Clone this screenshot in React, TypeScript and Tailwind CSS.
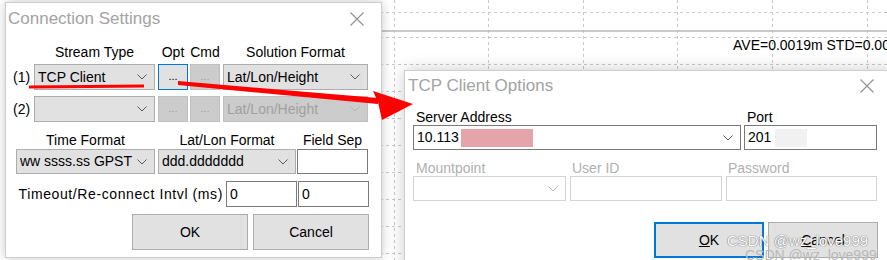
import React from 'react';

const font = { fontFamily: '"Liberation Sans", Arial, sans-serif' };

const Chevron: React.FC<{ muted?: boolean }> = ({ muted }) => (
    <svg width="10" height="6" viewBox="0 0 10 6" className="shrink-0">
        <polyline points="0.5,0.5 5,5 9.5,0.5" fill="none" stroke={muted ? '#b4b4b4' : '#5a5a5a'} strokeWidth="1" />
    </svg>
);

const CloseX = () => (
    <svg width="14" height="14" viewBox="0 0 14 14">
        <path d="M0.5 0.5 L13.5 13.5 M13.5 0.5 L0.5 13.5" stroke="#8f8f8f" strokeWidth="1.1" fill="none" />
    </svg>
);

interface ComboProps {
    text?: string;
    w: string;
    disabled?: boolean;
    white?: boolean;
    children?: React.ReactNode;
    className?: string;
}

const Combo: React.FC<ComboProps> = ({ text, w, disabled, white, children, className }) => {
    const box = white
        ? disabled
            ? 'bg-white border-[#d4d4d4]'
            : 'bg-white border-[#7a7a7a]'
        : disabled
            ? 'bg-[#cccccc] border-[#bfbfbf] text-[#a0a0a0]'
            : 'bg-[#e1e1e1] border-[#adadad]';
    return (
        <div className={`${w} ${box} ${className ?? ''} h-full border flex items-center pl-[3px] pr-[7px]`}>
            <div className="flex-1 flex items-center overflow-hidden whitespace-nowrap">
                {text}
                {children}
            </div>
            <Chevron muted={disabled} />
        </div>
    );
};

const DotBtn: React.FC<{ focus?: boolean; className?: string }> = ({ focus, className }) => (
    <div
        className={`w-[30px] h-full border flex items-center justify-center text-[11px] leading-none pb-[2px] ${
            focus ? 'bg-[#e1e1e1] border-[#0078d7] text-black' : 'bg-[#cccccc] border-[#bfbfbf] text-[#a0a0a0]'
        } ${className ?? ''}`}
    >
        ...
    </div>
);

const Field: React.FC<{ w: string; text?: string; disabled?: boolean; className?: string; children?: React.ReactNode }> = ({
    w,
    text,
    disabled,
    className,
    children,
}) => (
    <div
        className={`${w} h-full border bg-white flex items-center pl-[3px] ${
            disabled ? 'border-[#d4d4d4]' : 'border-[#7a7a7a]'
        } ${className ?? ''}`}
    >
        {text}
        {children}
    </div>
);

const Btn: React.FC<{ w: string; focus?: boolean; className?: string; children: React.ReactNode }> = ({
    w,
    focus,
    className,
    children,
}) => (
    <div
        className={`${w} h-full bg-[#e1e1e1] flex items-center justify-center ${
            focus ? 'border-2 border-[#0078d7]' : 'border border-[#adadad]'
        } ${className ?? ''}`}
    >
        {children}
    </div>
);

const ChartGrid = () => {
    const xs = [394, 488, 583, 677, 772, 867];
    const ys = [12, 37, 64, 91, 118, 145, 172, 199, 226, 253];
    return (
        <svg width="887" height="260" className="absolute inset-0">
            {xs.map(x => (
                <line key={x} x1={x + 0.5} y1={0} x2={x + 0.5} y2={260} stroke="#c9c9c9" strokeDasharray="3 3" />
            ))}
            {ys.map(y => (
                <line key={y} x1={380} y1={y + 0.5} x2={887} y2={y + 0.5} stroke="#c9c9c9" strokeDasharray="3 3" />
            ))}
            <line x1={380} y1={31} x2={887} y2={31} stroke="#b8b8b8" strokeWidth="1.5" />
        </svg>
    );
};

const ConnectionSettings = () => (
    <div className="absolute left-[5px] top-[2px] w-[377px] h-[256px] bg-white border border-[#cdcdcd] shadow-[0_0_10px_rgba(0,0,0,0.22)] flex flex-col text-[14px] text-black">
        <div className="h-[32px] flex items-center justify-between pl-[2px] pr-[17px]">
            <span className="text-[17px] text-[#a3a3a3]">Connection Settings</span>
            <CloseX />
        </div>

        {/* stream header */}
        <div className="mt-[8px] h-[18px] flex items-center pl-[28px] leading-none">
            <div className="w-[121px] text-center">Stream Type</div>
            <div className="w-[30px] ml-[3px] text-center">Opt</div>
            <div className="w-[30px] ml-[2px] text-center">Cmd</div>
            <div className="w-[145px] ml-[3px] text-center">Solution Format</div>
        </div>

        <div className="mt-[3px] h-[26px] flex items-center pl-[7px]">
            <div className="w-[21px]">(1)</div>
            <Combo w="w-[121px]" text="TCP Client" />
            <DotBtn focus className="ml-[3px]" />
            <DotBtn className="ml-[2px]" />
            <Combo w="w-[145px]" text="Lat/Lon/Height" className="ml-[3px]" />
        </div>

        <div className="mt-[6px] h-[26px] flex items-center pl-[7px]">
            <div className="w-[21px]">(2)</div>
            <Combo w="w-[121px]" />
            <DotBtn className="ml-[3px]" />
            <DotBtn className="ml-[2px]" />
            <Combo w="w-[145px]" text="Lat/Lon/Height" disabled className="ml-[3px]" />
        </div>

        {/* format header */}
        <div className="mt-[9px] h-[18px] flex items-center pl-[10px] leading-none">
            <div className="w-[139px] text-center">Time Format</div>
            <div className="w-[138px] ml-[3px] text-center">Lat/Lon Format</div>
            <div className="w-[71px] ml-[1px] text-center">Field Sep</div>
        </div>

        <div className="h-[25px] flex items-center pl-[10px]">
            <Combo w="w-[139px]" text="ww ssss.ss GPST" />
            <Combo w="w-[138px]" text="ddd.ddddddd" className="ml-[3px]" />
            <Field w="w-[71px]" className="ml-[1px]" />
        </div>

        <div className="mt-[7px] h-[26px] flex items-center justify-end pr-[12px]">
            <div className="mr-[3px] tracking-[0.6px] whitespace-nowrap">Timeout/Re-connect Intvl (ms)</div>
            <Field w="w-[71px]" text="0" />
            <Field w="w-[71px]" text="0" className="ml-[1px]" />
        </div>

        <div className="mt-[7px] h-[36px] flex items-center justify-end pr-[12px]">
            <Btn w="w-[116px]">OK</Btn>
            <Btn w="w-[116px]" className="ml-[5px]">
                Cancel
            </Btn>
        </div>
    </div>
);

const TcpClientOptions = () => (
    <div className="absolute left-[404px] top-[70px] w-[490px] h-[200px] bg-white border border-[#cdcdcd] shadow-[0_0_16px_rgba(0,0,0,0.2)] flex flex-col text-[14px] text-black">
        <div className="h-[30px] flex items-center justify-between pl-[3px] pr-[19px]">
            <span className="text-[17px] text-[#a3a3a3]">TCP Client Options</span>
            <CloseX />
        </div>

        <div className="mt-[7px] h-[17px] flex items-center pl-[8px] leading-none">
            <div className="w-[328px] pl-[3px]">Server Address</div>
            <div className="w-[133px] ml-[3px] pl-[3px]">Port</div>
        </div>
        <div className="h-[25px] flex items-center pl-[8px]">
            <Combo w="w-[328px]" white>
                <span>10.113</span>
                <span className="ml-[2px] w-[72px] h-[18px] bg-[#e5a4a9] blur-[0.6px]" />
            </Combo>
            <Field w="w-[133px]" className="ml-[3px]">
                <span>201</span>
                <span className="ml-[4px] w-[32px] h-[18px] bg-[#f1f1f1]" />
            </Field>
        </div>

        <div className="mt-[9px] h-[17px] flex items-center pl-[8px] leading-none text-[#b0b0b0]">
            <div className="w-[153px] pl-[3px]">Mountpoint</div>
            <div className="w-[152px] ml-[4px] pl-[2px]">User ID</div>
            <div className="w-[151px] ml-[4px] pl-[2px]">Password</div>
        </div>
        <div className="h-[25px] flex items-center pl-[8px]">
            <Combo w="w-[153px]" white disabled />
            <Field w="w-[152px]" disabled className="ml-[4px]" />
            <Field w="w-[151px]" disabled className="ml-[4px]" />
        </div>

        <div className="mt-[21px] h-[36px] flex items-center pl-[249px]">
            <Btn w="w-[110px]" focus>
                <span>
                    <u>O</u>K
                </span>
            </Btn>
            <Btn w="w-[110px]" className="ml-[4px]">
                <span>
                    <u>C</u>ancel
                </span>
            </Btn>
        </div>
    </div>
);

const Annotation = () => (
    <svg width="887" height="260" className="absolute inset-0 pointer-events-none">
        <line x1={29} y1={87} x2={144} y2={86} stroke="#ff0000" strokeWidth="3" />
        <polygon points="178,81 378,98 378,104 178,85" fill="#ff0000" />
        <polygon points="373,91 413,104 382,120 378,102" fill="#ff0000" />
    </svg>
);

export default function App() {
    return (
        <div className="relative w-[887px] h-[260px] overflow-hidden bg-white" style={font}>
            <ChartGrid />
            <div className="absolute left-[733px] top-[36px] text-[14px] leading-[18px] whitespace-nowrap text-black">
                AVE=0.0019m STD=0.0021m
            </div>
            <ConnectionSettings />
            <TcpClientOptions />
            <Annotation />
            <div className="absolute left-[727px] top-[232px] text-[15px] leading-[18px] whitespace-nowrap text-white [text-shadow:0_0_1px_#6b6b6b,0_0_1px_#6b6b6b]">
                CSDN @wz_love999
            </div>
            <div className="absolute left-[745px] top-[247px] text-[14px] leading-[16px] whitespace-nowrap text-[#b9b9b9]">
                CSDN @wz_love999
            </div>
        </div>
    );
}
